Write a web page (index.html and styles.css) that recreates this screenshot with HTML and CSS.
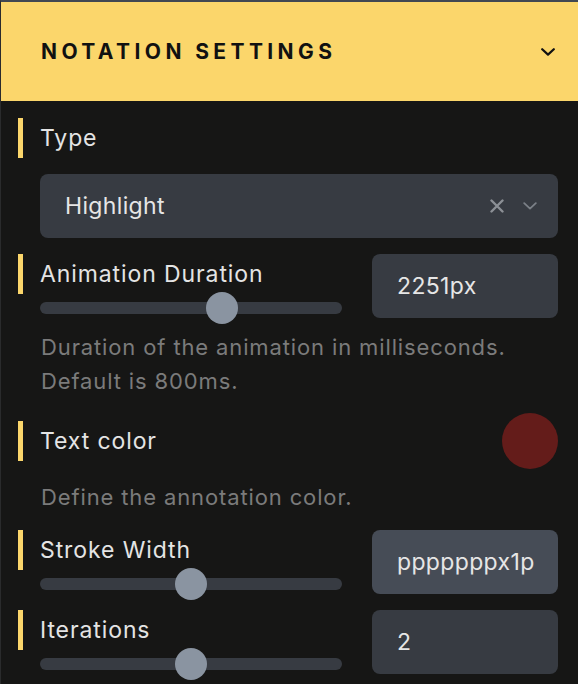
FILE: index.html
```html
<!DOCTYPE html>
<html lang="en">
<head>
<meta charset="utf-8">
<title>Notation Settings</title>
<link rel="stylesheet" href="styles.css">
</head>
<body>
<div class="panel">
  <header class="panel-head">
    <h2 class="panel-title">Notation Settings</h2>
    <svg class="head-chevron" viewBox="0 0 14 8" width="14" height="8"><path d="M1.2 1.2 L7 6.6 L12.8 1.2" fill="none" stroke="#111" stroke-width="2.2" stroke-linecap="round" stroke-linejoin="round"/></svg>
  </header>
  <div class="panel-body">
    <div class="field field-stack">
      <div class="label">Type</div>
      <div class="select">
        <span class="select-value">Highlight</span>
        <span class="select-icons">
          <svg viewBox="0 0 14 14" width="14" height="14"><path d="M1.5 1.5 L12.5 12.5 M12.5 1.5 L1.5 12.5" fill="none" stroke="#8c9096" stroke-width="2.4" stroke-linecap="round"/></svg>
          <svg viewBox="0 0 14 8" width="14" height="8"><path d="M1.2 1.2 L7 6.6 L12.8 1.2" fill="none" stroke="#7b8087" stroke-width="1.8" stroke-linecap="round" stroke-linejoin="round"/></svg>
        </span>
      </div>
    </div>

    <div class="field field-row">
      <div class="field-main">
        <div class="label">Animation Duration</div>
        <div class="slider"><span class="thumb" style="--p:0.615"></span></div>
      </div>
      <div class="num-input">2251px</div>
    </div>
    <p class="help">Duration of the animation in milliseconds. Default is 800ms.</p>

    <div class="field field-row field-color">
      <div class="label">Text color</div>
      <span class="swatch"></span>
    </div>
    <p class="help help-color">Define the annotation color.</p>

    <div class="field field-row">
      <div class="field-main">
        <div class="label">Stroke Width</div>
        <div class="slider"><span class="thumb" style="--p:0.5"></span></div>
      </div>
      <div class="num-input num-active">pppppppx1p</div>
    </div>

    <div class="field field-row field-last">
      <div class="field-main">
        <div class="label">Iterations</div>
        <div class="slider"><span class="thumb" style="--p:0.5"></span></div>
      </div>
      <div class="num-input">2</div>
    </div>
  </div>
</div>
</body>
</html>
```
FILE: styles.css
```css
* { box-sizing: border-box; }
html, body {
  margin: 0;
  padding: 0;
  background: #161615;
}
body {
  font-family: Inter, "Noto Sans", sans-serif;
  color: #e6e6e6;
  width: 578px;
  height: 684px;
  overflow: hidden;
}
.panel {
  border-top: 2px solid #414852;
  border-left: 1px solid #2a2b2c;
  min-height: 684px;
}
.panel-head {
  height: 99px;
  background: #fbd66b;
  display: flex;
  align-items: center;
  justify-content: space-between;
  padding: 0 23px 0 40px;
}
.panel-title {
  margin: 0;
  font-size: 21px;
  font-weight: 700;
  letter-spacing: 4.4px;
  text-transform: uppercase;
  color: #111111;
  line-height: 1;
}
.head-chevron { display: block; }
.panel-body {
  padding: 17px 20px 0 39px;
}
.field { margin-bottom: 16px; }
.label {
  margin-left: -22px;
  padding-left: 17px;
  border-left: 5px solid #fbd66b;
  height: 40px;
  line-height: 40px;
  font-size: 23px;
  letter-spacing: 0.9px;
  color: #e4e4e4;
  white-space: nowrap;
}
.field-stack .label { margin-bottom: 16px; }
.select {
  height: 64px;
  background: #373b42;
  border-radius: 8px;
  display: flex;
  align-items: center;
  justify-content: space-between;
  padding: 0 21px 0 25px;
}
.select-value {
  font-size: 23px;
  letter-spacing: 0.35px;
  color: #e6e6e6;
}
.select-icons {
  display: flex;
  align-items: center;
  gap: 19px;
}
.select-icons svg { display: block; }
.field-row {
  display: flex;
  align-items: flex-start;
  justify-content: space-between;
  gap: 30px;
}
.field-main {
  flex: 1;
  min-width: 0;
}
.slider {
  position: relative;
  height: 12px;
  margin-top: 8px;
  border-radius: 6px;
  background: #373b42;
}
.thumb {
  position: absolute;
  top: -10px;
  left: calc(var(--p) * (100% - 32px));
  width: 32px;
  height: 32px;
  border-radius: 50%;
  background: #8a94a1;
}
.num-input {
  flex: 0 0 186px;
  height: 64px;
  border-radius: 8px;
  background: #373b42;
  padding: 0 20px 0 25px;
  display: flex;
  align-items: center;
  font-size: 23px;
  letter-spacing: 0.35px;
  color: #e6e6e6;
  overflow: hidden;
  white-space: nowrap;
}
.num-active { background: #464c56; }
.help {
  margin: -4px 0 15px 1px;
  font-size: 22px;
  line-height: 34px;
  color: #7b7b7b;
  letter-spacing: 0.87px;
}
.field-color {
  align-items: center;
  margin-bottom: 11px;
}
.swatch {
  width: 56px;
  height: 56px;
  border-radius: 50%;
  background: #641c1a;
  flex: 0 0 56px;
}
.help-color { margin-top: 0; margin-bottom: 16px; }
.field-last { margin-bottom: 0; }
```
